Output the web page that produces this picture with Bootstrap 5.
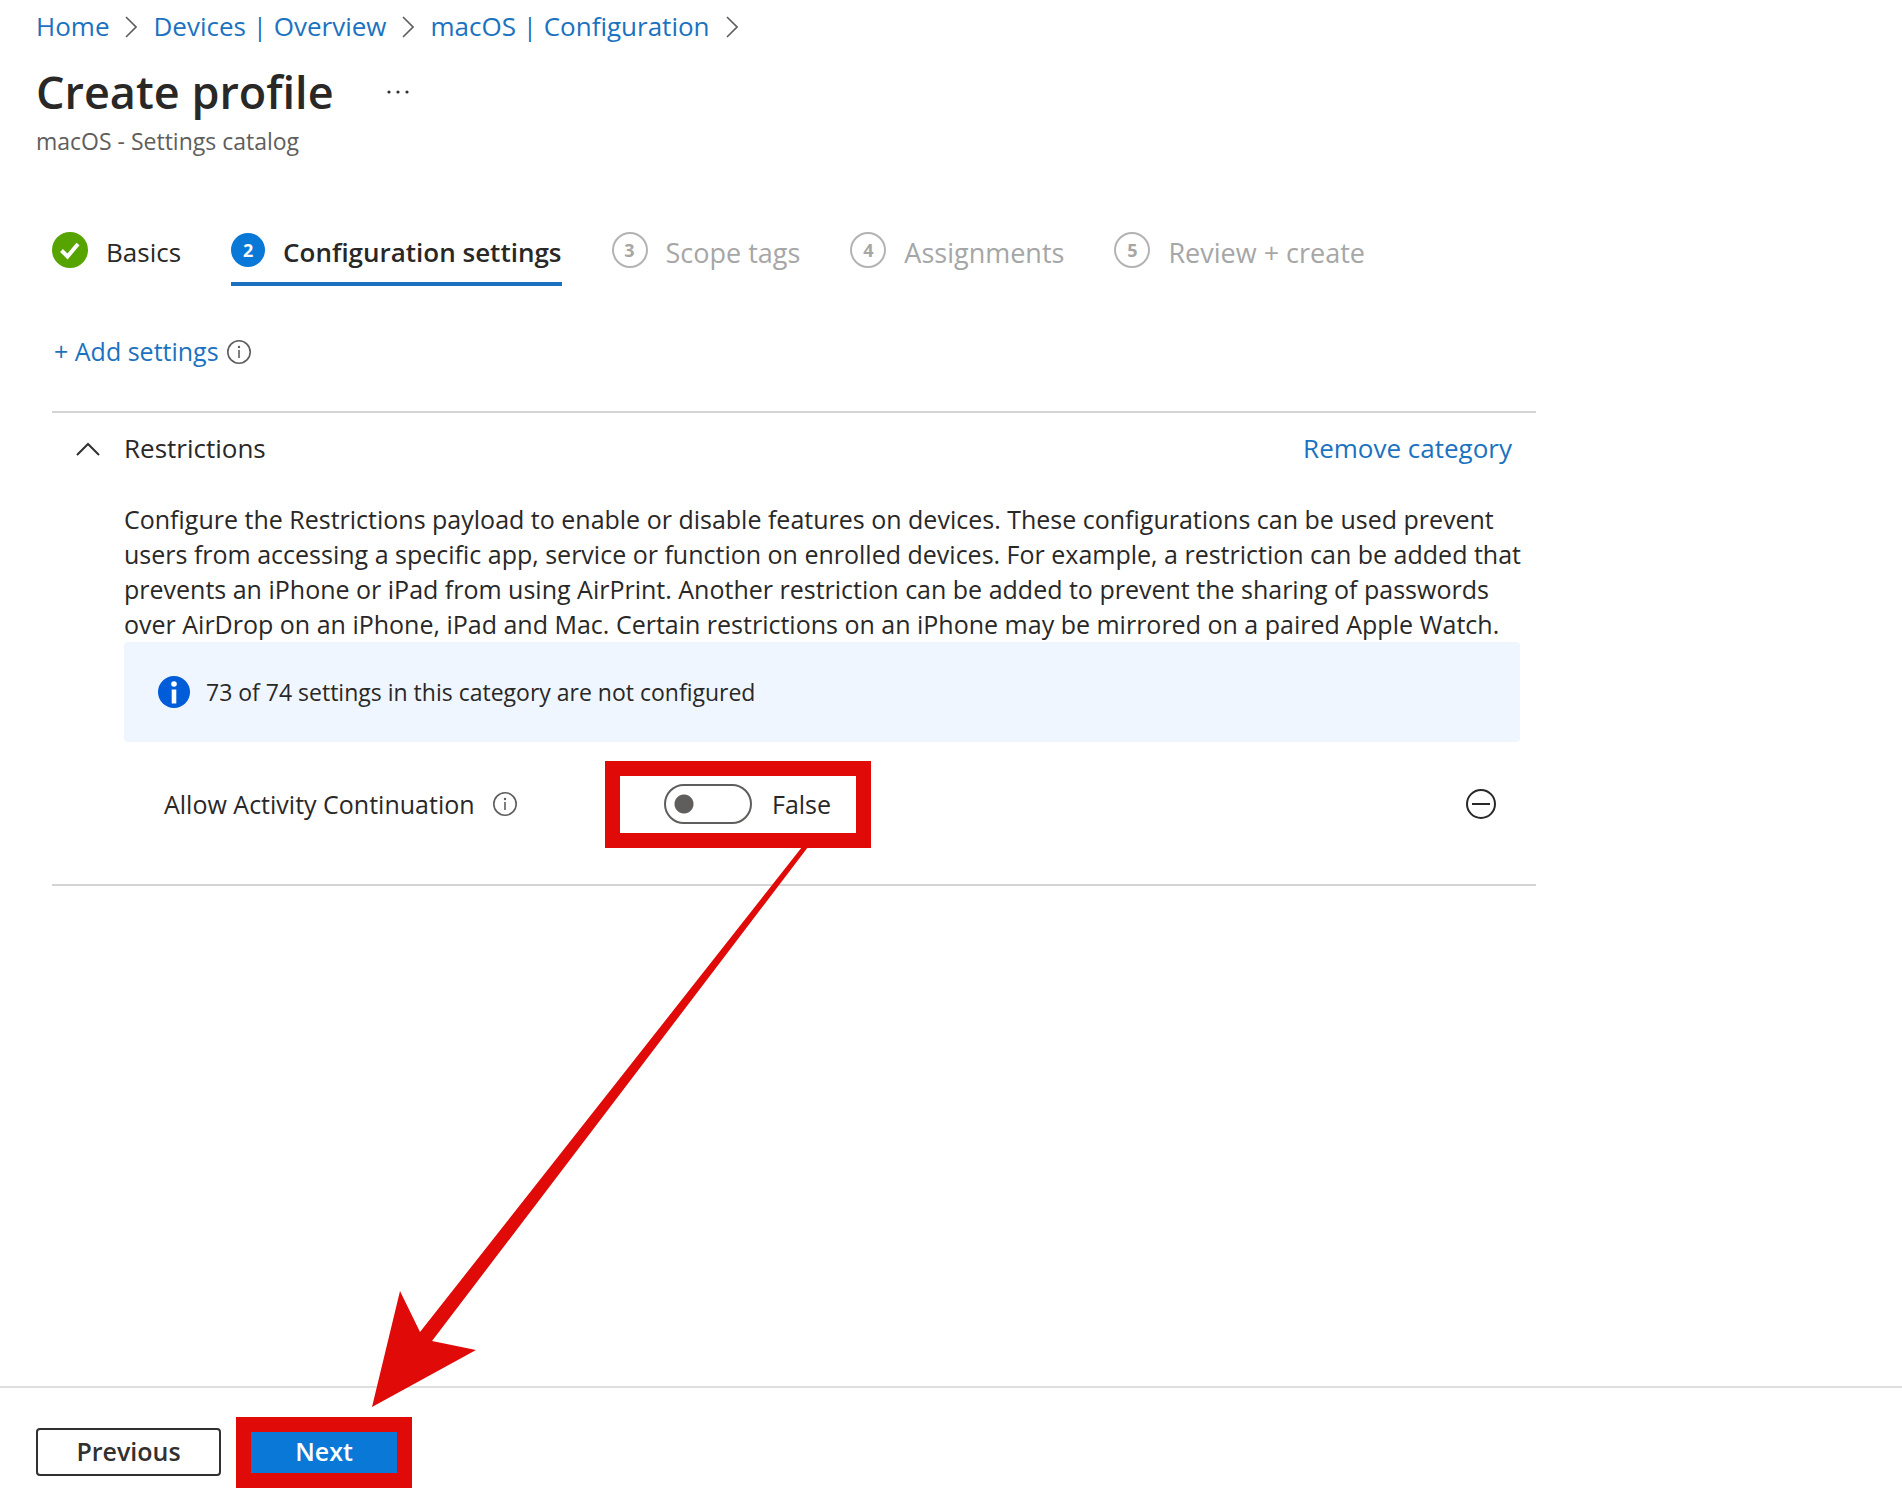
<!DOCTYPE html>
<html lang="en">
<head>
<meta charset="utf-8">
<meta name="viewport" content="width=device-width, initial-scale=1">
<title>Create profile</title>
<link href="https://cdn.jsdelivr.net/npm/bootstrap@5.3.0/dist/css/bootstrap.min.css" rel="stylesheet">
<style>
  body { font-family: "Open Sans", "Noto Sans", sans-serif; font-size: 26px; line-height: 35px; color: #292827; background: #fff; }
  a { color: #1b72c0; text-decoration: none; }
  svg { display: block; flex: none; }
  .page-head { padding: 9px 36px 0; }
  .crumbs { gap: 16px; }
  .title-row { gap: 52px; }
  .page-title { font-size: 45px; line-height: 64px; font-weight: 600; }
  .page-sub { margin-top: 1px; font-size: 23px; line-height: 32px; color: #605e5c; }
  .wizard { max-width: 1536px; padding-left: 52px; }
  .steps { margin-top: 70px; gap: 50px; }
  .step { display: flex; gap: 18px; height: 59px; font-size: 27px; color: #a6a6a6; padding-bottom: 10px; align-items: center; border-bottom: 4px solid transparent; }
  .step.done { font-size: 26px; color: #292827; }
  .step.current { font-size: 26px; color: #292827; font-weight: 600; border-color: #1b72c0; }
  .step-text { padding-top: 5px; }
  .step-num { width: 36px; height: 36px; border: 2px solid #b3b3b3; border-radius: 50%; font-size: 18px; line-height: 32px; font-weight: 700; text-align: center; flex: none; }
  .current .step-num { width: 34px; height: 34px; border: 0; line-height: 34px; background: #0a78d6; color: #fff; }
  .add-row { margin-top: 48px; gap: 8px; font-size: 25px; padding-left: 2px; }
  .category { margin-top: 42px; border-top: 2px solid #d4d4d4; border-bottom: 2px solid #d4d4d4; padding: 18px 8px 60px 72px; }
  .category-head { padding-right: 16px; margin-left: -48px; margin-bottom: 36px; gap: 24px; }
  .category-text { font-size: 25px; }
  .notice { height: 100px; margin-right: 8px; background: #f0f6ff; border-radius: 4px; padding: 0 34px; gap: 16px; font-size: 23px; }
  .setting { margin-top: 42px; padding: 0 32px 0 40px; font-size: 25px; }
  .setting-label { width: 500px; gap: 18px; }
  .switch-wrap { gap: 20px; }
  .form-switch .toggle { width: 88px; height: 40px; margin: 0; float: none; border: 2px solid #605e5c; border-radius: 20px; background: radial-gradient(circle at 18px 50%, #605e5c 9px, #fff 10px); }
  .form-switch .toggle:checked { background: radial-gradient(circle at 66px 50%, #fff 9px, #0a78d6 10px); }
  .callout { position: absolute; border: 15px solid #e00a08; pointer-events: none; }
  .callout-switch { inset: -23px -40px -24px -59px; }
  .callout-next { inset: -11px -15px -12px -15px; }
  .arrow { position: absolute; left: 372px; bottom: 101px; }
  .foot { border-top: 2px solid #dedede; height: 122px; padding: 40px 36px 0; gap: 30px; }
  .foot .btn { display: block; height: 48px; padding: 0 0 2px; font-size: 25px; line-height: 30px; font-weight: 600; border-radius: 4px; border-width: 2px; }
  .foot .btn-prev { width: 185px; color: #323130; border-color: #323130; background: #fff; }
  .foot .btn-next { width: 146px; color: #fff; background: #0a78d6; border-color: #0a78d6; }
</style>
<script src="https://cdn.jsdelivr.net/npm/bootstrap@5.3.0/dist/js/bootstrap.bundle.min.js"></script>
</head>
<body>
<div class="d-flex flex-column min-vh-100 position-relative">
  <header class="page-head">
    <nav class="crumbs d-flex align-items-center" aria-label="Breadcrumb">
      <a href="#">Home</a>
      <svg width="12" height="22" viewBox="0 0 12 22" fill="none" stroke="#605e5c" stroke-width="1.6"><path d="M1 1l10 10L1 21"/></svg>
      <a href="#">Devices | Overview</a>
      <svg width="12" height="22" viewBox="0 0 12 22" fill="none" stroke="#605e5c" stroke-width="1.6"><path d="M1 1l10 10L1 21"/></svg>
      <a href="#">macOS | Configuration</a>
      <svg width="12" height="22" viewBox="0 0 12 22" fill="none" stroke="#605e5c" stroke-width="1.6"><path d="M1 1l10 10L1 21"/></svg>
    </nav>
    <div class="title-row d-flex align-items-center mt-3">
      <h1 class="page-title m-0">Create profile</h1>
      <button type="button" class="btn p-0 border-0" aria-label="More actions"><svg width="24" height="6" viewBox="0 0 24 6" fill="#323130"><circle cx="3" cy="3" r="1.6"/><circle cx="12" cy="3" r="1.6"/><circle cx="21" cy="3" r="1.6"/></svg></button>
    </div>
    <div class="page-sub">macOS - Settings catalog</div>
  </header>

  <main class="wizard w-100 flex-grow-1">
    <div class="steps d-flex">
      <a href="#" class="step done">
        <svg width="36" height="36" viewBox="0 0 36 36"><circle cx="18" cy="18" r="18" fill="#57a300"/><path d="M9.500 18.500l6 6L26 12" fill="none" stroke="#fff" stroke-width="4"/></svg>
        <span class="step-text">Basics</span></a>
      <a href="#" class="step current" aria-current="step"><span class="step-num">2</span><span class="step-text">Configuration settings</span></a>
      <a href="#" class="step"><span class="step-num">3</span><span class="step-text">Scope tags</span></a>
      <a href="#" class="step"><span class="step-num">4</span><span class="step-text">Assignments</span></a>
      <a href="#" class="step"><span class="step-num">5</span><span class="step-text">Review + create</span></a>
    </div>

    <div class="add-row d-flex align-items-center">
      <a href="#">+ Add settings</a>
      <svg width="24" height="24" viewBox="0 0 24 24"><circle cx="12" cy="12" r="11.200" fill="none" stroke="#605e5c" stroke-width="1.600"/><circle cx="12" cy="7" r="1.200" fill="#605e5c"/><path d="M12 10v8" stroke="#605e5c" stroke-width="1.600"/></svg>
    </div>

    <section class="category">
      <div class="category-head d-flex align-items-center">
        <button type="button" class="btn p-0 border-0" aria-label="Collapse Restrictions"><svg width="24" height="14" viewBox="0 0 24 14" fill="none" stroke="#323130" stroke-width="2"><path d="M1 13L12 2l11 11"/></svg></button>
        <span>Restrictions</span>
        <a href="#" class="ms-auto">Remove category</a>
      </div>
      <p class="category-text m-0">Configure the Restrictions payload to enable or disable features on devices. These configurations can be used prevent users from accessing a specific app, service or function on enrolled devices. For example, a restriction can be added that prevents an iPhone or iPad from using AirPrint. Another restriction can be added to prevent the sharing of passwords over AirDrop on an iPhone, iPad and Mac. Certain restrictions on an iPhone may be mirrored on a paired Apple Watch.</p>
      <div class="notice d-flex align-items-center">
        <svg width="32" height="32" viewBox="0 0 32 32"><circle cx="16" cy="16" r="16" fill="#015cda"/><circle cx="16" cy="8" r="2.800" fill="#fff"/><path d="M16 13.500v14" stroke="#fff" stroke-width="4.600"/></svg>
        <span>73 of 74 settings in this category are not configured</span>
      </div>
      <div class="setting d-flex align-items-center">
        <div class="setting-label d-flex align-items-center">
          <label for="activity">Allow Activity Continuation</label>
          <svg width="24" height="24" viewBox="0 0 24 24"><circle cx="12" cy="12" r="11.200" fill="none" stroke="#605e5c" stroke-width="1.600"/><circle cx="12" cy="7" r="1.200" fill="#605e5c"/><path d="M12 10v8" stroke="#605e5c" stroke-width="1.600"/></svg>
        </div>
        <div class="switch-wrap form-switch p-0 d-flex align-items-center position-relative">
          <input class="form-check-input toggle" type="checkbox" role="switch" id="activity">
          <label for="activity">False</label>
          <span class="callout callout-switch"></span>
        </div>
        <button type="button" class="btn p-0 border-0 ms-auto" aria-label="Remove setting"><svg width="30" height="30" viewBox="0 0 30 30" fill="none" stroke="#292827" stroke-width="2"><circle cx="15" cy="15" r="14"/><path d="M6 15h18"/></svg></button>
      </div>
    </section>
  </main>

  <footer class="foot d-flex align-items-start">
    <button type="button" class="btn btn-prev">Previous</button>
    <div class="position-relative">
      <button type="button" class="btn btn-next">Next</button>
      <span class="callout callout-next"></span>
    </div>
  </footer>

  <svg class="arrow" width="440" height="560" viewBox="0 0 440 560" fill="#e00a08" aria-hidden="true"><path d="M0 560L28 444L48 485L430 0H436L60 494L104 503Z"/></svg>
</div>
</body>
</html>
